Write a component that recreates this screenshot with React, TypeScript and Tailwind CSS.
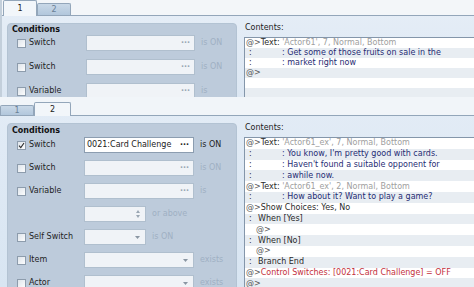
import React from "react";

const FONT = "font-['DejaVu_Sans',sans-serif]";

function Checkbox({ checked = false }: { checked?: boolean }) {
  return (
    <div className="w-[9px] h-[9px] shrink-0 border border-[#8d9cac] bg-gradient-to-br from-[#dfe5eb] to-[#fbfcfd] flex items-center justify-center">
      {checked && (
        <svg width="7" height="7" viewBox="0 0 7 7">
          <path d="M1 3.6 L2.8 5.6 L6 1" stroke="#2b2b2b" strokeWidth="1.1" fill="none" />
        </svg>
      )}
    </div>
  );
}

function TextBox({
  width,
  value,
  enabled = false,
  kind = "dots",
}: {
  width: number;
  value?: string;
  enabled?: boolean;
  kind?: "dots" | "spin" | "combo";
}) {
  return (
    <div
      className={
        "h-[16px] shrink-0 border flex items-center pl-[2px] pr-[4px] " +
        (enabled ? "bg-white border-[#8c9db0]" : "bg-[#f0f3f7] border-[#b0bfce]")
      }
      style={{ width }}
    >
      <span className="flex-1 text-[#1a1a1a] text-[8px] leading-none">{value}</span>
      {kind === "dots" && (
        <span className={"text-[8px] leading-none font-bold " + (enabled ? "text-[#222]" : "text-[#9aa6b3]")}>
          ···
        </span>
      )}
      {kind === "spin" && (
        <div className="flex flex-col items-center gap-[2px] mr-[1px]">
          <svg width="4" height="3" viewBox="0 0 4 3"><path d="M0 3 L2 0 L4 3Z" fill="#9aa6b3" /></svg>
          <svg width="4" height="3" viewBox="0 0 4 3"><path d="M0 0 L2 3 L4 0Z" fill="#9aa6b3" /></svg>
        </div>
      )}
      {kind === "combo" && (
        <svg width="5" height="3" viewBox="0 0 5 3" className="mr-[1px]"><path d="M0 0 L2.5 3 L5 0Z" fill="#8a96a3" /></svg>
      )}
    </div>
  );
}

function CondRow({
  label,
  labelW,
  checked = false,
  box,
  after,
  afterEnabled = false,
}: {
  label?: string;
  labelW: number;
  checked?: boolean;
  box: React.ReactNode;
  after?: string;
  afterEnabled?: boolean;
}) {
  return (
    <div className="h-[16px] flex items-center shrink-0">
      <div className="flex items-center gap-[3px] pl-[9px] shrink-0" style={{ width: labelW }}>
        {label && (
          <>
            <Checkbox checked={checked} />
            <span className="text-[8px] text-[#1e1e1e] leading-none">{label}</span>
          </>
        )}
      </div>
      {box}
      {after && (
        <span className={"ml-[6px] text-[8px] leading-none " + (afterEnabled ? "text-[#1e1e1e]" : "text-[#9fb0c3]")}>
          {after}
        </span>
      )}
    </div>
  );
}

type Seg = { t: string; c: string };
type Row = { indent?: number; segs: Seg[] };

const DARK = "text-[#2a2a2a]";
const GRAY = "text-[#a0a0a0]";
const BLUE = "text-[#1f2c73]";
const RED = "text-[#c4303c]";
const AT = "text-[#555]";

function cont(text: string): Row {
  return { segs: [{ t: ":", c: DARK + " w-[36px] pl-[3px]" }, { t: ": " + text, c: BLUE }] };
}

function ListBox({ rows, rowH }: { rows: Row[]; rowH: number }) {
  const filled = [...rows];
  while (filled.length < 20) filled.push({ segs: [] });
  return (
    <div className="flex-1 bg-white border-l border-t border-[#8496aa] overflow-hidden">
      {filled.map((r, i) => (
        <div
          key={i}
          className={"flex items-center whitespace-pre text-[8px] leading-none " + (i % 2 === 1 ? "bg-[#e8edf2]" : "bg-white")}
          style={{ height: rowH, paddingLeft: 1 + (r.indent ?? 0) }}
        >
          {r.segs.map((s, j) => (
            <span key={j} className={"shrink-0 " + s.c}>
              {s.t}
            </span>
          ))}
        </div>
      ))}
    </div>
  );
}

function Tab({ label, active, h, w }: { label: string; active: boolean; h: number; w: number }) {
  return (
    <div
      className={
        "flex items-center justify-center text-[8px] leading-none border border-[#93a6ba] rounded-t-[2px] shrink-0 " +
        (active
          ? "bg-[#f2f6fa] border-b-0 -mb-px text-[#222]"
          : "bg-gradient-to-b from-[#c9d8e7] to-[#b2c7dc] text-[#6a7f95] border-b-0")
      }
      style={{ height: h, width: w }}
    >
      {label}
    </div>
  );
}

const topRows: Row[] = [
  { segs: [{ t: "@>", c: AT }, { t: "Text: ", c: DARK }, { t: "'Actor61', 7, Normal, Bottom", c: GRAY }] },
  cont("Get some of those fruits on sale in the"),
  cont("market right now"),
  { segs: [{ t: "@>", c: AT }] },
];

const bottomRows: Row[] = [
  { segs: [{ t: "@>", c: AT }, { t: "Text: ", c: DARK }, { t: "'Actor61_ex', 7, Normal, Bottom", c: GRAY }] },
  cont("You know, I'm pretty good with cards."),
  cont("Haven't found a suitable opponent for"),
  cont("awhile now."),
  { segs: [{ t: "@>", c: AT }, { t: "Text: ", c: DARK }, { t: "'Actor61_ex', 2, Normal, Bottom", c: GRAY }] },
  cont("How about it? Want to play a game?"),
  { segs: [{ t: "@>", c: AT }, { t: "Show Choices: Yes, No", c: DARK }] },
  { segs: [{ t: ":", c: DARK + " w-[12px] pl-[3px]" }, { t: "When [Yes]", c: DARK }] },
  { indent: 10, segs: [{ t: "@>", c: AT }] },
  { segs: [{ t: ":", c: DARK + " w-[12px] pl-[3px]" }, { t: "When [No]", c: DARK }] },
  { indent: 10, segs: [{ t: "@>", c: AT }] },
  { segs: [{ t: ":", c: DARK + " w-[12px] pl-[3px]" }, { t: "Branch End", c: DARK }] },
  { segs: [{ t: "@>", c: AT }, { t: "Control Switches: [0021:Card Challenge] = OFF", c: RED }] },
  { segs: [{ t: "@>", c: AT }] },
];

export default function App() {
  return (
    <div className={"w-[474px] h-[287px] overflow-hidden flex flex-col bg-white " + FONT}>
      {/* Top window */}
      <div className="h-[97px] shrink-0 flex flex-col overflow-hidden border-l-2 border-[#c3cfdb] bg-gradient-to-b from-[#e6eef7] to-[#dce7f3]">
        <div className="h-[16px] shrink-0 flex items-end border-b border-[#93a6ba] bg-[#f3f6f9] pl-[1px]">
          <Tab label="1" active h={16} w={34} />
          <Tab label="2" active={false} h={12} w={34} />
        </div>
        <div className="flex flex-1 min-h-0">
          <div className="ml-[5px] mt-[7px] w-[230px] h-[120px] shrink-0 rounded-[4px] bg-[#bdcbdb] border border-[#b3c3d3] flex flex-col">
            <div className="h-[12px] pl-[4px] flex items-center text-[8px] font-bold text-[#111] leading-none shrink-0">
              Conditions
            </div>
            <div className="flex flex-col gap-[8px] mt-[-1px]">
              <CondRow label="Switch" labelW={78} box={<TextBox width={109} />} after="is ON" />
              <CondRow label="Switch" labelW={78} box={<TextBox width={109} />} after="is ON" />
              <CondRow label="Variable" labelW={78} box={<TextBox width={109} />} after="is" />
            </div>
          </div>
          <div className="ml-[7px] flex-1 flex flex-col pt-[8px] min-w-0">
            <div className="h-[13px] text-[8px] leading-none text-[#222] pl-[1px] shrink-0">Contents:</div>
            <ListBox rows={topRows} rowH={10} />
          </div>
        </div>
      </div>

      {/* Bottom window */}
      <div className="flex-1 flex flex-col overflow-hidden bg-gradient-to-b from-[#e3ecf6] to-[#d8e5f2]">
        <div className="h-[19px] shrink-0 flex items-end border-b border-[#93a6ba] bg-[#f1f5f9]">
          <Tab label="1" active={false} h={10} w={34} />
          <Tab label="2" active h={14} w={37} />
        </div>
        <div className="flex flex-1 min-h-0">
          <div className="ml-[7px] mt-[7px] w-[230px] h-[200px] shrink-0 rounded-[4px] bg-[#bdcbdb] border border-[#b3c3d3] flex flex-col">
            <div className="h-[13px] pl-[4px] flex items-center text-[8px] font-bold text-[#111] leading-none shrink-0">
              Conditions
            </div>
            <div className="flex flex-col gap-[7px]">
              <CondRow
                label="Switch"
                labelW={76}
                checked
                box={<TextBox width={110} enabled value="0021:Card Challenge" />}
                after="is ON"
                afterEnabled
              />
              <CondRow label="Switch" labelW={76} box={<TextBox width={110} />} after="is ON" />
              <CondRow label="Variable" labelW={76} box={<TextBox width={110} />} after="is" />
              <CondRow labelW={76} box={<TextBox width={62} kind="spin" />} after="or above" />
              <CondRow label="Self Switch" labelW={76} box={<TextBox width={62} kind="combo" />} after="is ON" />
              <CondRow label="Item" labelW={76} box={<TextBox width={110} kind="combo" />} after="exists" />
              <CondRow label="Actor" labelW={76} box={<TextBox width={110} kind="combo" />} after="exists" />
            </div>
          </div>
          <div className="ml-[7px] flex-1 flex flex-col pt-[7px] min-w-0">
            <div className="h-[14px] text-[8px] leading-none text-[#222] pl-[1px] shrink-0 pt-[1px]">Contents:</div>
            <ListBox rows={bottomRows} rowH={10.8} />
          </div>
        </div>
      </div>
    </div>
  );
}
